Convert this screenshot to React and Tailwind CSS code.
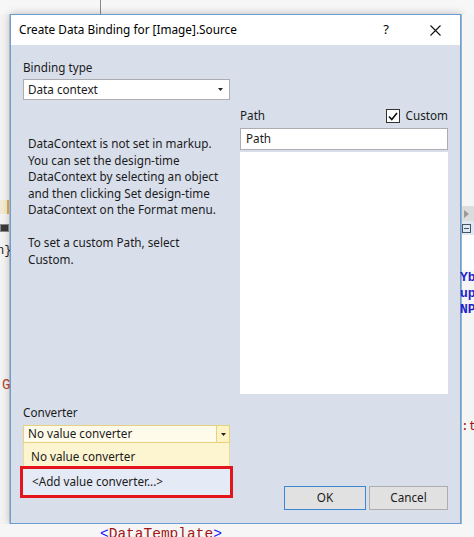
import React from "react";

const ui = { fontFamily: '"Noto Sans", "Open Sans", sans-serif' };
const mono = { fontFamily: '"Liberation Mono", "DejaVu Sans Mono", monospace' };

function Arrow() {
  return (
    <svg width="5" height="3" viewBox="0 0 5 3" className="shrink-0">
      <path d="M0 0 H5 L2.5 3 Z" fill="#222" />
    </svg>
  );
}

export default function App() {
  return (
    <div
      className="w-[474px] h-[537px] overflow-hidden bg-[#f4f4f4] grid grid-cols-[10px_451px_13px] grid-rows-[14px_510px_13px] text-[11.7px] text-[#1b1b1b]"
      style={ui}
    >
      {/* top strip */}
      <div className="bg-[#f7f7f7]" />
      <div className="bg-[#f7f7f7]">
        <div className="ml-[90px] w-px h-full bg-[#8a8a8a]" />
      </div>
      <div className="bg-[#f7f7f7]" />

      {/* left editor fragments */}
      <div className="flex flex-col bg-[#f3f3f3] border-r border-[#c9cdd3]">
        <div className="h-[186px]" />
        <div className="h-[14px] bg-[#f3ead2] border-r-2 border-[#e0b050]" />
        <div className="h-[10px]" />
        <div className="h-[8px] w-[9px] bg-[#3a3a3a] border border-[#888]" />
        <div className="h-[12px]" />
        <div className="leading-[14px] text-[12px] text-[#222] -ml-[3px]" style={mono}>n}</div>
        <div className="h-[120px]" />
        <div className="leading-[14px] text-[14px] text-[#b5472a] ml-[2px]" style={mono}>G</div>
      </div>

      {/* dialog */}
      <div className="flex flex-col border border-[#6a9fd6] bg-white shadow-[0_0_8px_rgba(0,0,0,0.25)]">
        <div className="h-[30px] shrink-0 bg-white flex items-center pl-[8px] pr-[19px]">
          <span className="flex-1 text-[11.8px] text-black">Create Data Binding for [Image].Source</span>
          <span className="text-[13px] text-black mr-[41px]">?</span>
          <svg width="11" height="11" viewBox="0 0 11 11">
            <path d="M0.5 0.5 L10.5 10.5 M10.5 0.5 L0.5 10.5" stroke="#111" strokeWidth="1.1" />
          </svg>
        </div>

        <div className="flex-1 bg-[#d8dfeb] px-[12px] flex flex-col">
          <div className="pt-[14px] leading-[16px]">Binding type</div>
          <div className="mt-[4px] h-[21px] w-[207px] bg-white border border-[#abadb3] flex items-center pl-[4px] pr-[6px]">
            <span className="flex-1">Data context</span>
            <Arrow />
          </div>

          <div className="mt-[8px] grid grid-cols-[207px_208px] gap-x-[10px]">
            <div className="pt-[27px] pl-[5px] leading-[16.5px]">
              <p>DataContext is not set in markup.</p>
              <p>You can set the design-time</p>
              <p>DataContext by selecting an object</p>
              <p>and then clicking Set design-time</p>
              <p>DataContext on the Format menu.</p>
              <p className="mt-[16.5px]">To set a custom Path, select</p>
              <p>Custom.</p>
            </div>
            <div className="flex flex-col">
              <div className="h-[16px] flex items-center justify-between">
                <span>Path</span>
                <span className="flex items-center">
                  <span className="w-[14px] h-[14px] bg-white border border-[#333] flex items-center justify-center">
                    <svg width="10" height="9" viewBox="0 0 10 9">
                      <path d="M1 4.5 L3.8 7.5 L9 1" fill="none" stroke="#111" strokeWidth="1.6" />
                    </svg>
                  </span>
                  <span className="ml-[6px]">Custom</span>
                </span>
              </div>
              <div className="mt-[4px] h-[22px] bg-white border border-[#abadb3] flex items-center pl-[5px]">Path</div>
              <div className="mt-[2px] h-[242px] bg-white" />
            </div>
          </div>

          <div className="flex-1 flex justify-between">
            <div className="w-[207px] flex flex-col pt-[10px]">
              <div className="leading-[16px]">Converter</div>
              <div className="mt-[5px] h-[18px] bg-[#fffbea] border border-[#e6d27e] flex items-center">
                <span className="flex-1 pl-[4px]">No value converter</span>
                <span className="w-[13px] h-full border-l border-[#e6d27e] bg-[#fdf3c4] flex items-center justify-center">
                  <Arrow />
                </span>
              </div>
              <div className="bg-[#fdf5cf] border-x border-[#eadb9a] h-[23px] flex items-center pl-[7px] pt-[4px]">No value converter</div>
              <div className="-mx-[3px] h-[32px] border-[3px] border-[#e3141c] bg-[#e5ebf6] flex items-center pl-[9px]">
                &lt;Add value converter...&gt;
              </div>
            </div>
            <div className="flex flex-col justify-end pb-[13px]">
              <div className="flex gap-[3px]">
                <div className="w-[82px] h-[24px] bg-[#e1e1e1] border border-[#3c86d6] flex items-center justify-center">OK</div>
                <div className="w-[79px] h-[24px] bg-[#e1e1e1] border border-[#adadad] flex items-center justify-center">Cancel</div>
              </div>
            </div>
          </div>
        </div>
      </div>

      {/* right editor fragments */}
      <div className="flex flex-col bg-[#f5f5f5] border-l border-[#9fb3c9]">
        <div className="h-[192px]" />
        <div className="h-[15px] bg-[#dcdcdc] flex items-center pl-[2px]">
          <svg width="5" height="8" viewBox="0 0 5 8"><path d="M0 0 L5 4 L0 8 Z" fill="#9a9a9a" /></svg>
        </div>
        <div className="h-[14px] bg-[#dfe8f3] flex items-center">
          <span className="w-[9px] h-[9px] border border-[#456] flex items-center justify-center">
            <span className="w-[5px] h-px bg-[#456]" />
          </span>
        </div>
        <div className="h-[35px] bg-white" />
        <div className="leading-[16px] text-[13px] font-bold text-[#1f1fc8] -ml-[2px]" style={mono}>
          <div>Yb</div>
          <div>up</div>
          <div>NP</div>
        </div>
        <div className="h-[102px]" />
        <div className="leading-[14px] text-[13px] text-[#a31515] -ml-[1px]" style={mono}>:ti</div>
      </div>

      {/* bottom strip */}
      <div className="bg-[#f6f6f6]" />
      <div className="bg-[#f6f6f6] pl-[90px] leading-[20px] text-[14.5px]" style={mono}>
        <span className="text-[#1a1aff]">&lt;</span>
        <span className="text-[#a31515]">DataTemplate</span>
        <span className="text-[#1a1aff]">&gt;</span>
      </div>
      <div className="bg-[#f6f6f6]" />
    </div>
  );
}
